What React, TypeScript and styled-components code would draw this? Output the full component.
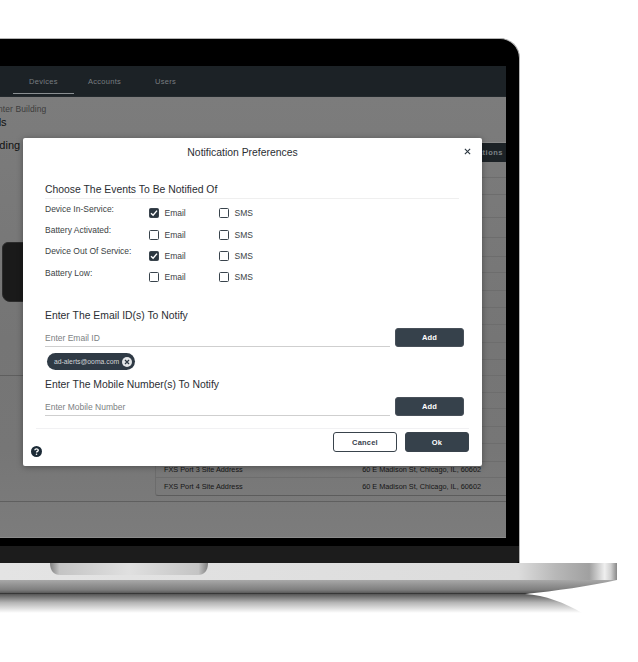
import React from "react";
import styled, { createGlobalStyle } from "styled-components";

const Global = createGlobalStyle`
  html, body { margin: 0; padding: 0; background: #fff; }
  * { box-sizing: border-box; }
  #root { font-family: "Liberation Sans", Arial, sans-serif; }
`;

const Scene = styled.div`
  width: 638px;
  height: 662px;
  overflow: hidden;
  padding-top: 38px;
  background: #fff;
`;

const Lid = styled.div`
  width: 620px;
  height: 525px;
  margin-left: -100px;
  background: #000;
  border-style: solid;
  border-color: #b4b4b4;
  border-width: 1.5px 1.5px 0 0;
  border-top-right-radius: 20px;
  padding: 26.5px 13px 0 0;
  display: flex;
  flex-direction: column;
`;

const Screen = styled.div`
  position: relative;
  height: 472px;
  display: flex;
  flex-direction: column;
  flex: none;
`;

const Nav = styled.nav`
  height: 31px;
  flex: none;
  background: #1c2226;
  display: flex;
  padding-left: 113px;
  border-bottom: 1px solid #23292d;
`;

const NavItem = styled.div<{ $active?: boolean; $w: number }>`
  width: ${(p) => p.$w}px;
  height: 28px;
  display: flex;
  align-items: center;
  justify-content: center;
  font-size: 7.5px;
  letter-spacing: 0.3px;
  color: #787d80;
  border-bottom: 1px solid ${(p) => (p.$active ? "#8a8f92" : "transparent")};
  padding-top: 5px;
`;

const Page = styled.div`
  flex: 1;
  position: relative;
  background: linear-gradient(180deg, #7c7c7c 0%, #757575 55%, #767676 80%, #7c7c7c 100%);
  border-bottom: 1px solid #8c8c8c;
  overflow: hidden;
`;

const Header = styled.div`
  height: 45px;
  padding: 7px 0 0 66px;
`;

const Crumb = styled.div`
  font-size: 8.5px;
  line-height: 10px;
  color: #3c3c3c;
  letter-spacing: 0.1px;
`;

const PageTitle = styled.div`
  font-size: 11px;
  line-height: 13px;
  margin-top: 2px;
  margin-left: 7px;
  color: #111;
`;

const Body = styled.div`
  display: flex;
`;

const Side = styled.div`
  width: 255px;
  flex: none;
`;

const SideName = styled.div`
  font-size: 11px;
  line-height: 13px;
  color: #111;
  padding-left: 81px;
  margin-top: -3px;
`;

const Device = styled.div`
  height: 60px;
  margin: 90px 0 0 102px;
  background: #1a1a1a;
  border: 1px solid #2c2c2c;
  border-radius: 6px 0 0 8px;
  width: 153px;
`;

const Rule = styled.div`
  height: 1px;
  background: #5e5e5e;
  margin-top: 73px;
`;

const Table = styled.div`
  flex: 1;
  margin-top: 1px;
`;

const ActionBar = styled.div`
  height: 19px;
  display: flex;
  justify-content: flex-end;
  box-shadow: 0 -1px 0 #8a8a8a;
`;

const ActionButton = styled.div`
  width: 120px;
  background: #1c2226;
  color: #7d8286;
  font-size: 7.5px;
  letter-spacing: 0.5px;
  font-weight: 700;
  display: flex;
  align-items: center;
  justify-content: flex-end;
  padding-right: 3px;
`;

const Row = styled.div<{ $h: number }>`
  height: ${(p) => p.$h}px;
  border-bottom: 1px solid #6d6d6d;
  border-left: 1px solid #6c6c6c;
  display: flex;
  align-items: center;
  justify-content: space-between;
  padding: 0 25px 0 8px;
  font-size: 7.3px;
  color: #161616;
  white-space: nowrap;
  &:last-child { border-bottom-left-radius: 3px; border-bottom-color: #5c5c5c; }
`;

const PageFoot = styled.div`
  position: absolute;
  left: 0;
  right: 0;
  top: 404px;
  height: 1px;
  background: #5f5f5f;
`;

const Modal = styled.div`
  position: absolute;
  left: 123px;
  top: 41px;
  width: 459px;
  height: 328px;
  background: #fff;
  border-radius: 2px;
  box-shadow: 0 1px 6px rgba(0, 0, 0, 0.35);
  padding: 0 13px;
  display: flex;
  flex-direction: column;
  color: #2e3237;
`;

const ModalHead = styled.div`
  height: 28px;
  display: flex;
  align-items: center;
  justify-content: center;
  position: relative;
  flex: none;
  padding: 2px 20px 0 0;
`;

const ModalTitle = styled.div`
  font-size: 10.4px;
  color: #2b2e33;
`;

const Close = styled.svg`
  position: absolute;
  right: -2px;
  top: 10.5px;
  width: 7px;
  height: 7px;
`;

const Content = styled.div`
  padding-left: 9px;
  flex: none;
`;

const SectionTitle = styled.div<{ $rule?: boolean; $mt: number }>`
  font-size: 10.4px;
  line-height: 13px;
  margin-top: ${(p) => p.$mt}px;
  color: #2b2e33;
  ${(p) => p.$rule && `
    padding-bottom: 2px;
    margin-right: 10px;
    margin-bottom: 4px;
    border-bottom: 1.5px solid #efefef;
  `}
`;

const PrefRow = styled.div`
  height: 21.4px;
  display: grid;
  grid-template-columns: 104px 70px 60px;
  align-items: center;
  font-size: 8.5px;
  color: #3b3f44;
`;

const PrefLabel = styled.div`
  margin-top: -9px;
`;

const Option = styled.div`
  display: flex;
  align-items: center;
  gap: 5.5px;
`;

const Box = styled.span<{ $on?: boolean }>`
  width: 10px;
  height: 10px;
  border: 1.2px solid #39434c;
  border-radius: 1.5px;
  background: ${(p) => (p.$on ? "#2b3640" : "#fff")};
  display: inline-flex;
  align-items: center;
  justify-content: center;
  flex: none;
`;

const Field = styled.div`
  display: flex;
  align-items: flex-end;
  gap: 5px;
  margin-top: 6px;
`;

const InputLine = styled.div`
  width: 345px;
  height: 19px;
  border-bottom: 1.2px solid #cfcfcf;
  font-size: 8.5px;
  line-height: 10px;
  color: #7c7f83;
  display: flex;
  align-items: flex-end;
  padding-bottom: 3px;
`;

const AddButton = styled.div`
  width: 69px;
  height: 19px;
  background: #36414b;
  border: 1px solid #485059;
  border-radius: 3px;
  color: #fff;
  font-size: 7.5px;
  font-weight: 700;
  letter-spacing: 0.2px;
  display: flex;
  align-items: center;
  justify-content: center;
`;

const Chip = styled.div`
  width: 88px;
  height: 17px;
  margin: 6px 0 0 2px;
  background: #2f3a45;
  border-radius: 8.5px;
  color: #cfd3d6;
  font-size: 6.8px;
  display: flex;
  align-items: center;
  justify-content: space-between;
  padding: 0 3px 0 7px;
`;

const ChipX = styled.svg`
  width: 10px;
  height: 10px;
  flex: none;
`;

const Foot = styled.div`
  margin-top: 12px;
  border-top: 1.5px solid #f1f1f3;
  height: 37px;
  display: flex;
  justify-content: flex-end;
  align-items: flex-start;
  padding-top: 3px;
  gap: 8px;
  position: relative;
`;

const Help = styled.svg`
  position: absolute;
  left: -5px;
  top: 17px;
  width: 11px;
  height: 11px;
`;

const FootButton = styled.div<{ $primary?: boolean }>`
  width: 64px;
  height: 20px;
  border-radius: 3px;
  border: 1px solid #39434c;
  background: ${(p) => (p.$primary ? "#36414b" : "#fff")};
  color: ${(p) => (p.$primary ? "#fff" : "#36414b")};
  font-size: 7.5px;
  font-weight: 700;
  letter-spacing: 0.2px;
  display: flex;
  align-items: center;
  justify-content: center;
`;

const BezelBottom = styled.div`
  height: 8px;
  flex: none;
`;

const Chin = styled.div`
  flex: 1;
  background: #1c1c1c;
  margin-right: -13px;
  border-bottom-right-radius: 3px;
`;

const BaseArt = styled.svg`
  display: block;
  width: 638px;
  height: 60px;
`;

const rowHeights = [16, 17, 23, 20, 19, 16, 18, 17, 17, 18, 17, 16, 17, 16, 18, 17, 18, 16, 18];
const prefs: [string, boolean][] = [
  ["Device In-Service:", true],
  ["Battery Activated:", false],
  ["Device Out Of Service:", true],
  ["Battery Low:", false],
];

const Check = () => (
  <svg width="8" height="8" viewBox="0 0 8 8" aria-hidden="true">
    <path d="M1 4.2 L3.1 6.2 L7 1.6" fill="none" stroke="#fff" strokeWidth="1.4" />
  </svg>
);

export default function App() {
  return (
    <Scene>
      <Global />
      <Lid>
        <Screen>
          <Nav>
            <NavItem $active $w={61}>Devices</NavItem>
            <NavItem $w={61}>Accounts</NavItem>
            <NavItem $w={61}>Users</NavItem>
          </Nav>
          <Page>
            <Header>
              <Crumb>Data Center Building</Crumb>
              <PageTitle>Details</PageTitle>
            </Header>
            <Body>
              <Side>
                <SideName>Building</SideName>
                <Device />
                <Rule />
              </Side>
              <Table>
                <ActionBar>
                  <ActionButton>Notifications</ActionButton>
                </ActionBar>
                {rowHeights.map((h, i) => (
                  <Row key={i} $h={h}>
                    {i >= rowHeights.length - 2 ? (
                      <>
                        <span>FXS Port {i - rowHeights.length + 5} Site Address</span>
                        <span>60 E Madison St, Chicago, IL, 60602</span>
                      </>
                    ) : null}
                  </Row>
                ))}
              </Table>
            </Body>
            <PageFoot />
            <Modal>
              <ModalHead>
                <ModalTitle>Notification Preferences</ModalTitle>
                <Close viewBox="0 0 8 8" aria-hidden="true">
                  <path d="M1 1 L7 7 M7 1 L1 7" stroke="#2b3640" strokeWidth="1.3" />
                </Close>
              </ModalHead>
              <Content>
                <SectionTitle $rule $mt={17}>Choose The Events To Be Notified Of</SectionTitle>
                {prefs.map(([label, on]) => (
                  <PrefRow key={label}>
                    <PrefLabel>{label}</PrefLabel>
                    <Option>
                      <Box $on={on}>{on && <Check />}</Box>
                      Email
                    </Option>
                    <Option>
                      <Box />
                      SMS
                    </Option>
                  </PrefRow>
                ))}
                <SectionTitle $mt={21}>Enter The Email ID(s) To Notify</SectionTitle>
                <Field>
                  <InputLine>Enter Email ID</InputLine>
                  <AddButton>Add</AddButton>
                </Field>
                <Chip>
                  ad-alerts@ooma.com
                  <ChipX viewBox="0 0 10 10" aria-hidden="true">
                    <circle cx="5" cy="5" r="5" fill="#e4e6e8" />
                    <path d="M3 3 L7 7 M7 3 L3 7" stroke="#2f3a45" strokeWidth="1.3" />
                  </ChipX>
                </Chip>
                <SectionTitle $mt={8}>Enter The Mobile Number(s) To Notify</SectionTitle>
                <Field>
                  <InputLine>Enter Mobile Number</InputLine>
                  <AddButton>Add</AddButton>
                </Field>
              </Content>
              <Foot>
                <Help viewBox="0 0 11 11" aria-hidden="true">
                  <circle cx="5.5" cy="5.5" r="5.5" fill="#1b2a36" />
                  <path d="M3.8 4.3 C3.8 2.4 7.3 2.4 7.3 4.2 C7.3 5.4 5.5 5.3 5.5 6.6" fill="none" stroke="#fff" strokeWidth="1.3" />
                  <circle cx="5.5" cy="8.3" r="0.8" fill="#fff" />
                </Help>
                <FootButton>Cancel</FootButton>
                <FootButton $primary>Ok</FootButton>
              </Foot>
            </Modal>
          </Page>
        </Screen>
        <BezelBottom />
        <Chin />
      </Lid>
      <BaseArt viewBox="0 0 638 60" aria-hidden="true">
        <defs>
          <linearGradient id="top" x1="0" x2="1" y1="0" y2="0">
            <stop offset="0" stopColor="#e4e4e4" />
            <stop offset="0.84" stopColor="#dcdcdc" />
            <stop offset="0.9" stopColor="#b8b8b8" />
            <stop offset="0.955" stopColor="#a0a0a0" />
            <stop offset="0.98" stopColor="#efefef" />
            <stop offset="0.99" stopColor="#d0d0d0" />
            <stop offset="1" stopColor="#888888" />
          </linearGradient>
          <linearGradient id="lip" x1="0" x2="0" y1="0" y2="1">
            <stop offset="0" stopColor="#a8a8a8" />
            <stop offset="0.7" stopColor="#7e7e7e" />
            <stop offset="1" stopColor="#4e4e4e" />
          </linearGradient>
          <linearGradient id="shade" x1="0" x2="0" y1="0" y2="1">
            <stop offset="0" stopColor="#555555" />
            <stop offset="0.45" stopColor="#b4b4b4" />
            <stop offset="1" stopColor="#ffffff" />
          </linearGradient>
          <linearGradient id="notch" x1="0" x2="1" y1="0" y2="0">
            <stop offset="0" stopColor="#808080" />
            <stop offset="0.06" stopColor="#c4c4c4" />
            <stop offset="0.5" stopColor="#e0e0e0" />
            <stop offset="0.94" stopColor="#c4c4c4" />
            <stop offset="1" stopColor="#808080" />
          </linearGradient>
        </defs>
        <path d="M0 31 H525 C545 32 565 40 582 50 H0 Z" fill="url(#shade)" />
        <path d="M0 17 H617 C590 23 555 28 525 31 H0 Z" fill="url(#lip)" />
        <path d="M0 30.5 H525 L530 31 H0 Z" fill="#1a1a1a" />
        <rect x="0" y="0" width="617" height="17" fill="url(#top)" />
        <path d="M50 0 H208 C208 8 204 12 198 12 H60 C54 12 50 8 50 0 Z" fill="url(#notch)" />
      </BaseArt>
    </Scene>
  );
}
